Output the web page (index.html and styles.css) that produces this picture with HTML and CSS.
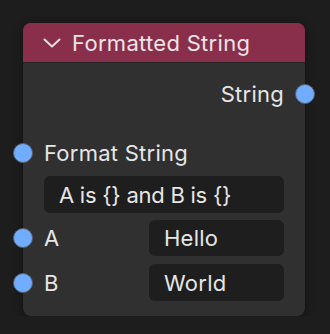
FILE: index.html
```html
<!DOCTYPE html>
<html lang="en">
<head>
    <meta charset="UTF-8">
    <title>Formatted String</title>
    <link rel="stylesheet" href="styles.css">
</head>
<body>
    <div class="node">
        <div class="header">
            <svg class="chevron" width="18" height="10" viewBox="0 0 18 10">
                <polyline points="1.5,1.5 9,8.5 16.5,1.5" fill="none" stroke="#e8dde1" stroke-width="2" stroke-linecap="round" stroke-linejoin="round"/>
            </svg>
            <span class="title">Formatted String</span>
        </div>
        <div class="content">
            <div class="row output">
                <span>String</span>
                <span class="socket socket-right"></span>
            </div>
            <div class="row label-row">
                <span class="socket socket-left"></span>
                <span>Format String</span>
            </div>
            <div class="field wide">A is {} and B is {}</div>
            <div class="row input a-row">
                <span class="socket socket-left"></span>
                <span>A</span>
                <div class="field">Hello</div>
            </div>
            <div class="row input">
                <span class="socket socket-left"></span>
                <span>B</span>
                <div class="field">World</div>
            </div>
        </div>
    </div>
</body>
</html>
```

FILE: styles.css
```css
body {
    margin: 0;
    padding: 23px 0 0 23px;
    background-color: #1d1d1d;
    font-family: Inter, "Noto Sans", sans-serif;
    color: #e6e6e6;
}

.node {
    width: 282px;
    background-color: #303030;
    border-radius: 8px;
    box-shadow: 0 2px 10px rgba(0, 0, 0, 0.45);
}

.header {
    height: 40px;
    display: flex;
    align-items: center;
    gap: 11px;
    padding-left: 20px;
    background-color: #8a2f4b;
    border-radius: 8px 8px 0 0;
    border-bottom: 1px solid #262626;
    box-sizing: border-box;
}

.chevron {
    display: block;
}

.title {
    font-size: 22px;
    letter-spacing: 0.3px;
    color: #ece4e7;
}

.content {
    padding: 13px 21px 15px 21px;
    font-size: 22px;
    letter-spacing: 0.25px;
}

.row {
    position: relative;
    height: 36px;
    display: flex;
    align-items: center;
}

.output {
    justify-content: flex-end;
    margin-bottom: 23px;
}

.label-row {
    margin-bottom: 5px;
}

.input {
    display: grid;
    grid-template-columns: 1fr 135px;
    align-items: center;
    height: 37px;
}

.a-row {
    height: 36px;
    margin-bottom: 8px;
}

.field {
    height: 36px;
    display: flex;
    align-items: center;
    padding-left: 15px;
    background-color: #1e1e1e;
    border-radius: 6px;
    box-sizing: border-box;
}

.wide {
    height: 37px;
    margin-bottom: 7px;
    letter-spacing: -0.25px;
}

.input .field {
    height: 100%;
}

.socket {
    position: absolute;
    top: 50%;
    width: 20px;
    height: 20px;
    margin-top: -10px;
    border-radius: 50%;
    background-color: #70acff;
    border: 1.5px solid #5b5f66;
    box-sizing: border-box;
}

.socket-left {
    left: -31px;
}

.socket-right {
    right: -31px;
}
```
